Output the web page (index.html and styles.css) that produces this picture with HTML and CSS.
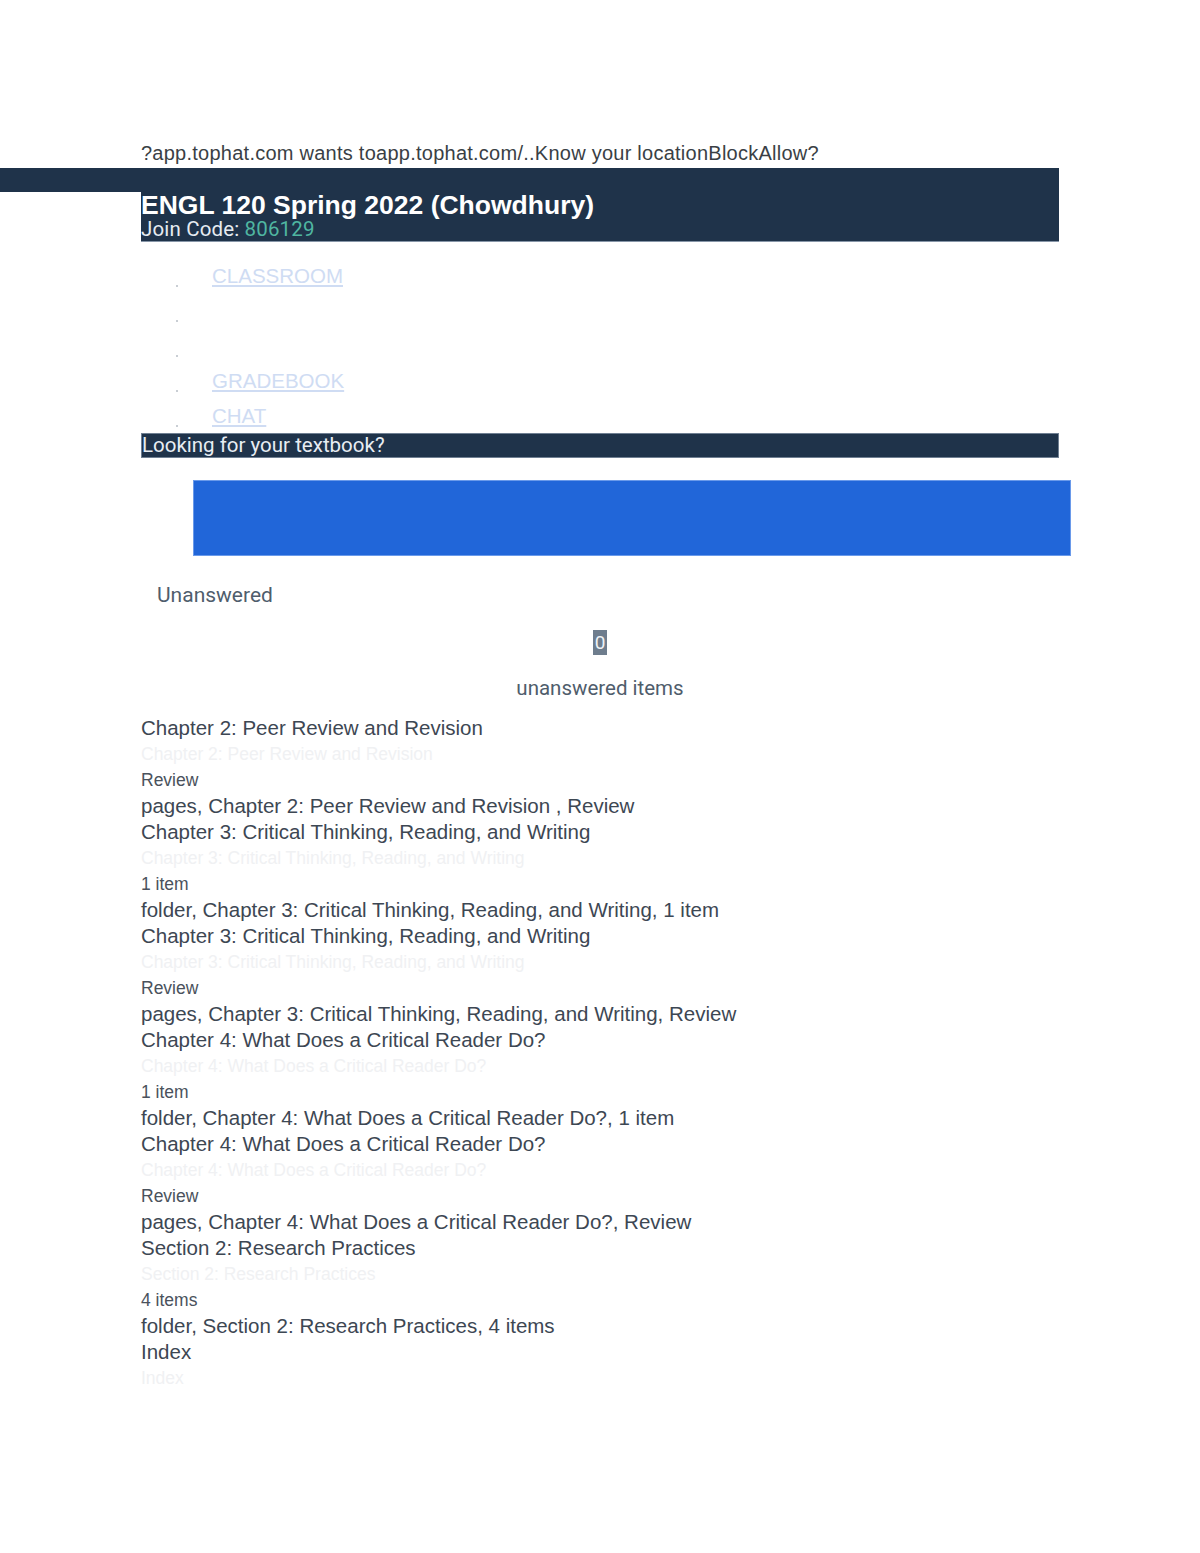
FILE: index.html
```html
<!DOCTYPE html>
<html lang="en">
<head>
<meta charset="utf-8">
<title>ENGL 120 Spring 2022 (Chowdhury)</title>
<link rel="stylesheet" href="styles.css">
</head>
<body>
<div class="page">
  <p class="prompt">?app.tophat.com wants toapp.tophat.com/..Know your locationBlockAllow?</p>
  <header class="course">
    <div class="course-strip"></div>
    <div class="course-main">
      <h1 class="course-title">ENGL 120 Spring 2022 (Chowdhury)</h1>
      <div class="join">Join Code: <span class="join-code">806129</span></div>
    </div>
  </header>
  <ul class="nav">
    <li class="nav-item"><span class="dot"></span><a class="nav-link" href="#">CLASSROOM</a></li>
    <li class="nav-item"><span class="dot"></span></li>
    <li class="nav-item"><span class="dot"></span></li>
    <li class="nav-item"><span class="dot"></span><a class="nav-link" href="#">GRADEBOOK</a></li>
    <li class="nav-item"><span class="dot"></span><a class="nav-link" href="#">CHAT</a></li>
  </ul>
  <div class="textbook">Looking for your textbook?</div>
  <div class="banner"></div>
  <div class="unanswered">Unanswered</div>
  <div class="count"><span class="badge">0</span></div>
  <div class="count-label">unanswered items</div>
  <div class="items">
    <div class="t-main">Chapter 2: Peer Review and Revision</div>
    <div class="t-faint">Chapter 2: Peer Review and Revision</div>
    <div class="t-meta">Review</div>
    <div class="t-main">pages, Chapter 2: Peer Review and Revision , Review</div>
    <div class="t-main">Chapter 3: Critical Thinking, Reading, and Writing</div>
    <div class="t-faint">Chapter 3: Critical Thinking, Reading, and Writing</div>
    <div class="t-meta">1 item</div>
    <div class="t-main">folder, Chapter 3: Critical Thinking, Reading, and Writing, 1 item</div>
    <div class="t-main">Chapter 3: Critical Thinking, Reading, and Writing</div>
    <div class="t-faint">Chapter 3: Critical Thinking, Reading, and Writing</div>
    <div class="t-meta">Review</div>
    <div class="t-main">pages, Chapter 3: Critical Thinking, Reading, and Writing, Review</div>
    <div class="t-main">Chapter 4: What Does a Critical Reader Do?</div>
    <div class="t-faint">Chapter 4: What Does a Critical Reader Do?</div>
    <div class="t-meta">1 item</div>
    <div class="t-main">folder, Chapter 4: What Does a Critical Reader Do?, 1 item</div>
    <div class="t-main">Chapter 4: What Does a Critical Reader Do?</div>
    <div class="t-faint">Chapter 4: What Does a Critical Reader Do?</div>
    <div class="t-meta">Review</div>
    <div class="t-main">pages, Chapter 4: What Does a Critical Reader Do?, Review</div>
    <div class="t-main">Section 2: Research Practices</div>
    <div class="t-faint">Section 2: Research Practices</div>
    <div class="t-meta">4 items</div>
    <div class="t-main">folder, Section 2: Research Practices, 4 items</div>
    <div class="t-main">Index</div>
    <div class="t-faint">Index</div>
  </div>
</div>
</body>
</html>
```
FILE: styles.css
```css
html, body {
  margin: 0;
  padding: 0;
  background: #ffffff;
}

body {
  font-family: "Liberation Sans", Arial, sans-serif;
  color: #3d4753;
}

.page {
  padding-top: 141px;
  padding-bottom: 100px;
}

.prompt {
  margin: 0 0 3px 141px;
  font-size: 20px;
  line-height: 24px;
  color: #3a3f45;
  letter-spacing: 0.25px;
}

.course {
  display: flex;
  flex-direction: column;
  width: 1059px;
}

.course-strip {
  height: 24px;
  background: #1f334a;
}

.course-main {
  margin-left: 141px;
  height: 50px;
  background: #1f334a;
  border-bottom: 1px solid #8796a8;
  box-sizing: border-box;
  display: flex;
  flex-direction: column;
}

.course-title {
  margin: 0;
  font-size: 26.5px;
  line-height: 26px;
  font-weight: bold;
  color: #ffffff;
  letter-spacing: 0;
}

.join {
  font-family: Roboto, "Liberation Sans", sans-serif;
  font-size: 20.5px;
  line-height: 22px;
  color: #e6ebf1;
  letter-spacing: 0.15px;
}

.join-code {
  color: #4fb6a1;
}

.nav {
  list-style: none;
  margin: 16px 0 0 0;
  padding: 0 0 0 176px;
}

.nav-item {
  height: 35px;
  display: flex;
  align-items: center;
}

.dot {
  width: 2px;
  height: 2px;
  background: #c9ced4;
  align-self: flex-end;
  margin-bottom: 6px;
  margin-right: 34px;
  flex: none;
}

.nav-link {
  font-size: 20.5px;
  line-height: 24px;
  color: #cfdcf3;
  text-decoration: underline;
  text-decoration-color: #cfdcf3;
}

.textbook {
  margin-left: 141px;
  width: 918px;
  height: 25px;
  box-sizing: border-box;
  background: #1f334a;
  border: 1px solid #6f7f92;
  font-family: Roboto, "Liberation Sans", sans-serif;
  font-size: 20.5px;
  line-height: 23px;
  color: #e8edf3;
}

.banner {
  margin: 22px 0 0 193px;
  width: 878px;
  height: 76px;
  box-sizing: border-box;
  background: #2166d9;
  border: 1px solid #6a9aea;
}

.unanswered {
  margin: 27px 0 0 157px;
  font-family: Roboto, "Liberation Sans", sans-serif;
  font-size: 21px;
  line-height: 24px;
  color: #4f5d6c;
}

.count {
  margin-top: 23px;
  display: flex;
  justify-content: center;
}

.badge {
  width: 14px;
  height: 25px;
  background: #6e7d8d;
  color: #eef2f6;
  font-family: Roboto, "Liberation Sans", sans-serif;
  font-size: 19px;
  line-height: 25px;
  text-align: center;
}

.count-label {
  margin-top: 21px;
  text-align: center;
  font-family: Roboto, "Liberation Sans", sans-serif;
  font-size: 20.5px;
  line-height: 24px;
  color: #4f5d6c;
}

.items {
  margin: 15px 0 0 141px;
  display: flex;
  flex-direction: column;
}

.t-main,
.t-faint,
.t-meta {
  height: 26px;
  line-height: 26px;
  white-space: nowrap;
}

.t-main {
  font-size: 20.5px;
  color: #3d4753;
}

.t-faint {
  font-size: 17.5px;
  color: #f0f1f3;
}

.t-meta {
  font-size: 17.5px;
  color: #4a525c;
}
```
